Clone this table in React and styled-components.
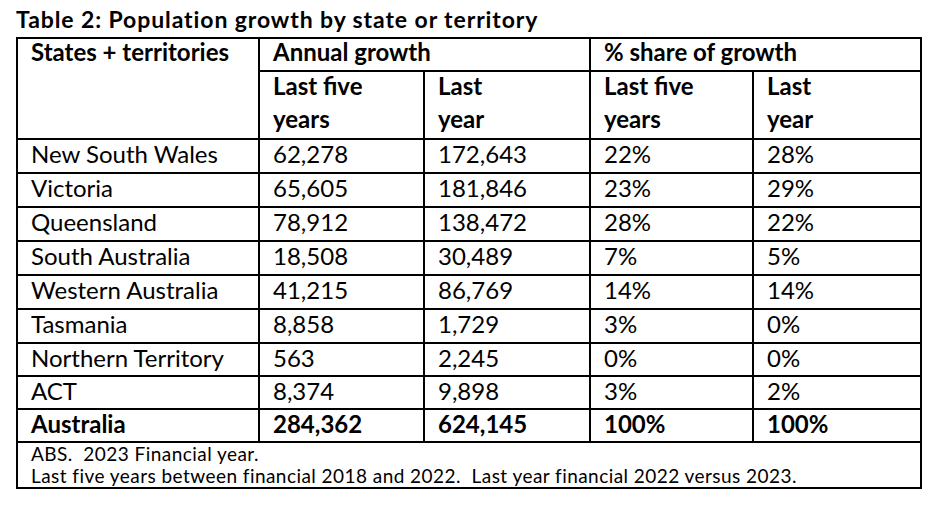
import React from "react";
import styled, {createGlobalStyle} from "styled-components";

const GlobalStyle = createGlobalStyle`
  html, body {
    margin: 0;
    background: #ffffff;
  }
  body {
    font-family: Lato, "Noto Sans", "Liberation Sans", sans-serif;
    color: #000000;
  }
`;

const Page = styled.div`
  padding: 4px 0 0 16px;
`;

const Title = styled.div`
  font-size: 23px;
  font-weight: 700;
  line-height: 30px;
  letter-spacing: 0.9px;
  margin-bottom: 3px;
`;

const Table = styled.table`
  border-collapse: collapse;
  table-layout: fixed;
  width: 904px;
  border: 2px solid #000;
`;

const Cell = styled.td`
  border: 2px solid #000;
  padding: 0 0 0 13px;
  height: ${({h}) => h || 32}px;
  line-height: ${({lh}) => lh || 28}px;
  font-size: 24px;
  font-weight: ${({bold}) => (bold ? 700 : 400)};
  vertical-align: top;
  white-space: nowrap;
  overflow: hidden;
`;

const HeadCell = styled(Cell).attrs({as: "th"})`
  text-align: left;
  font-weight: 700;
`;

const HeadLine = styled.span`
  display: block;
  height: 33px;
  line-height: 28px;
`;

const NoteCell = styled.td`
  border: 2px solid #000;
  padding: 0 0 0 13px;
  height: 44px;
  font-size: 19px;
  line-height: 22px;
  letter-spacing: 0.45px;
  vertical-align: top;
`;

const rows = [
  ["New South Wales", "62,278", "172,643", "22%", "28%"],
  ["Victoria", "65,605", "181,846", "23%", "29%"],
  ["Queensland", "78,912", "138,472", "28%", "22%"],
  ["South Australia", "18,508", "30,489", "7%", "5%"],
  ["Western Australia", "41,215", "86,769", "14%", "14%"],
  ["Tasmania", "8,858", "1,729", "3%", "0%"],
  ["Northern Territory", "563", "2,245", "0%", "0%", 31],
  ["ACT", "8,374", "9,898", "3%", "2%", 31],
];

const total = ["Australia", "284,362", "624,145", "100%", "100%"];

const TwoLine = ({top, bottom}) => (
  <>
    <HeadLine>{top}</HeadLine>
    <HeadLine>{bottom}</HeadLine>
  </>
);

const App = () => {
  return (
    <Page>
      <GlobalStyle />
      <Title>Table 2: Population growth by state or territory</Title>
      <Table>
        <colgroup>
          <col style={{width: 242}} />
          <col style={{width: 165}} />
          <col style={{width: 166}} />
          <col style={{width: 163}} />
          <col style={{width: 168}} />
        </colgroup>
        <thead>
          <tr>
            <HeadCell rowSpan={2} lh={26}>States + territories</HeadCell>
            <HeadCell colSpan={2} h={31} lh={26}>Annual growth</HeadCell>
            <HeadCell colSpan={2} h={31} lh={26}>% share of growth</HeadCell>
          </tr>
          <tr>
            <HeadCell h={65}><TwoLine top="Last five" bottom="years" /></HeadCell>
            <HeadCell h={65}><TwoLine top="Last" bottom="year" /></HeadCell>
            <HeadCell h={65}><TwoLine top="Last five" bottom="years" /></HeadCell>
            <HeadCell h={65}><TwoLine top="Last" bottom="year" /></HeadCell>
          </tr>
        </thead>
        <tbody>
          {rows.map((r) => (
            <tr key={r[0]}>
              {r.slice(0, 5).map((v, i) => (
                <Cell key={i} h={r[5]}>{v}</Cell>
              ))}
            </tr>
          ))}
          <tr>
            {total.map((v, i) => (
              <Cell key={i} h={31} bold>{v}</Cell>
            ))}
          </tr>
          <tr>
            <NoteCell colSpan={5}>
              ABS.&nbsp; 2023 Financial year.
              <br />
              Last five years between financial 2018 and 2022.&nbsp; Last year financial 2022 versus 2023.
            </NoteCell>
          </tr>
        </tbody>
      </Table>
    </Page>
  );
};

export default App;
